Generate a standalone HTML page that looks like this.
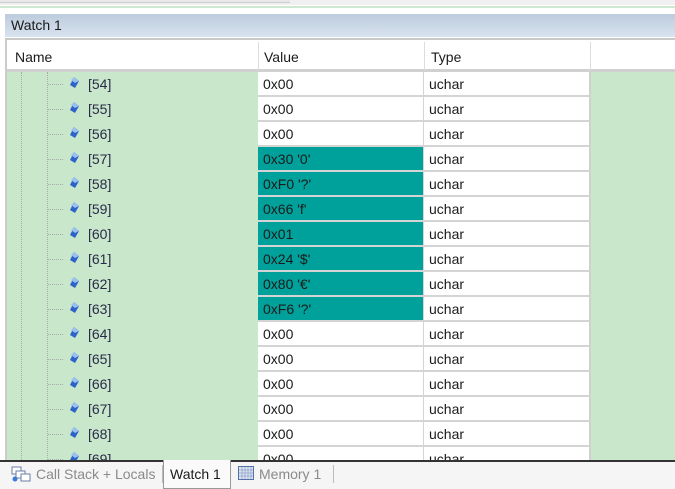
<!DOCTYPE html>
<html><head><style>
*{margin:0;padding:0;box-sizing:border-box}
body{width:675px;height:489px;overflow:hidden;background:#fff;font-family:"Liberation Sans",sans-serif;font-size:14px;color:#1a1a1a;position:relative}
.a{position:absolute}
.row{position:absolute;left:5px;width:670px;height:25px}
.nm{position:absolute;left:0;width:253px;height:25px}
.v{position:absolute;left:253px;width:166px;height:25px;background:#fff;border-bottom:2px solid #d4d4d4;border-right:1px solid #d4d4d4;padding:4px 0 0 5px}
.v.t{background:#00a19a}
.ty{position:absolute;left:419px;width:167px;height:25px;background:#fff;border-bottom:2px solid #d4d4d4;border-right:2px solid #d0d0d0;padding:4px 0 0 5px}
.lb{position:absolute;left:83px;top:4px;color:#2a2a4a}
.ic{position:absolute;left:63px;top:5px}
.hd{position:absolute;left:43px;top:12px;width:15px;border-top:1px dotted #aaa}
</style></head><body>
<div class="a" style="left:0;top:0;width:675px;height:5px;background:#f0f0f0"></div>
<div class="a" style="left:0;top:0;width:290px;height:3px;background:#e8e8e8;border-bottom:1px solid #ccc"></div>
<div class="a" style="left:0;top:6px;width:675px;height:2px;background:#cde8d0"></div>
<div class="a" style="left:5px;top:14px;width:670px;height:23px;background:linear-gradient(#bccbdc,#d8e3ee);padding:3px 0 0 6px;color:#1a1a1a">Watch 1</div>
<div class="a" style="left:5px;top:38px;width:670px;height:2px;background:#c8c8c8"></div>
<div class="a" style="left:5px;top:40px;width:670px;height:420px;background:#c9e8cb"></div>
<div class="a" style="left:5px;top:40px;width:670px;height:32px;background:#fff;border-bottom:3px solid #d0d0d0"></div>
<div class="a" style="left:258px;top:42px;width:1px;height:28px;background:#ddd"></div>
<div class="a" style="left:424px;top:42px;width:1px;height:28px;background:#ddd"></div>
<div class="a" style="left:590px;top:42px;width:1px;height:28px;background:#ddd"></div>
<div class="a" style="left:15px;top:49px">Name</div>
<div class="a" style="left:264px;top:49px">Value</div>
<div class="a" style="left:431px;top:49px">Type</div>
<div class="a" style="left:5px;top:40px;width:2px;height:420px;background:#ccc"></div>
<div class="a" style="left:21px;top:72px;height:388px;border-left:1px dotted #aaa"></div>
<div class="a" style="left:47px;top:72px;height:388px;border-left:1px dotted #aaa"></div>
<div id="rows"></div>
<script>
var vals={57:["0x30 '0'"],58:["0xF0 '?'"],59:["0x66 'f'"],60:["0x01"],61:["0x24 '$'"],62:["0x80 '€'"],63:["0xF6 '?'"]};
var h='';
for(var i=54;i<=69;i++){var y=72+25*(i-54);var t=vals[i];
h+='<div class="row" style="top:'+y+'px"><div class="nm"><div class="hd"></div><svg class="ic" width="12" height="12" viewBox="0 0 12 12"><path d="M6 0L11 4L7 11L2 8Z" fill="#2d62c8"/><path d="M6 0L11 4L7 6L3 3Z" fill="#9cc0f0"/></svg><span class="lb">['+i+']</span></div><div class="v'+(t?' t':'')+'">'+(t?t[0]:'0x00')+'</div><div class="ty">uchar</div></div>';}
document.getElementById('rows').innerHTML=h;
</script>
<div class="a" style="left:0;top:460px;width:675px;height:29px;background:#f5f5f5;border-top:2px solid #333"></div>
<div class="a" style="left:163px;top:460px;width:68px;height:29px;background:#fafafa;border:1px solid #999;border-top:none"></div>
<svg class="a" style="left:11px;top:466px" width="20" height="16" viewBox="0 0 20 16"><rect x="1" y="1" width="9" height="7" fill="#fff" stroke="#6a7fa8"/><rect x="5" y="5" width="9" height="7" fill="#fff" stroke="#6a7fa8"/><rect x="10" y="8" width="9" height="7" fill="#fff" stroke="#6a7fa8"/><circle cx="4" cy="13" r="2.5" fill="#3a7bd5"/></svg>
<div class="a" style="left:36px;top:466px;color:#8a8a8a">Call Stack + Locals</div>
<div class="a" style="left:162px;top:465px;width:1px;height:18px;background:#bbb"></div>
<div class="a" style="left:170px;top:466px;color:#1a1a1a">Watch 1</div>
<svg class="a" style="left:238px;top:466px" width="16" height="14" viewBox="0 0 16 14"><rect x="0.5" y="0.5" width="15" height="13" fill="#dfe6f2" stroke="#5470a8"/><path d="M1 4H15M1 7H15M1 10H15M4 1V13M7 1V13M10 1V13M13 1V13" stroke="#8aa0c8" stroke-width="0.8"/></svg>
<div class="a" style="left:259px;top:466px;color:#8a8a8a">Memory 1</div>
<div class="a" style="left:333px;top:465px;width:1px;height:18px;background:#bbb"></div>
</body></html>
